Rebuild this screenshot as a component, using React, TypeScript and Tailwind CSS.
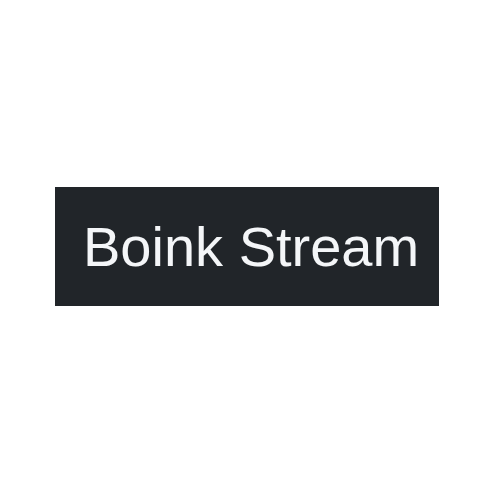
export default function App() {
  return (
    <main className="min-h-[500px] w-[500px] bg-white pt-[187px] pl-[55px]">
      <div className="flex h-[119px] w-[384px] items-center bg-[#212529] pl-[28px]">
        <span className="font-['Liberation_Sans',Arial,sans-serif] text-[56px] leading-none text-[#f4f6f8]">
          Boink Stream
        </span>
      </div>
    </main>
  );
}
